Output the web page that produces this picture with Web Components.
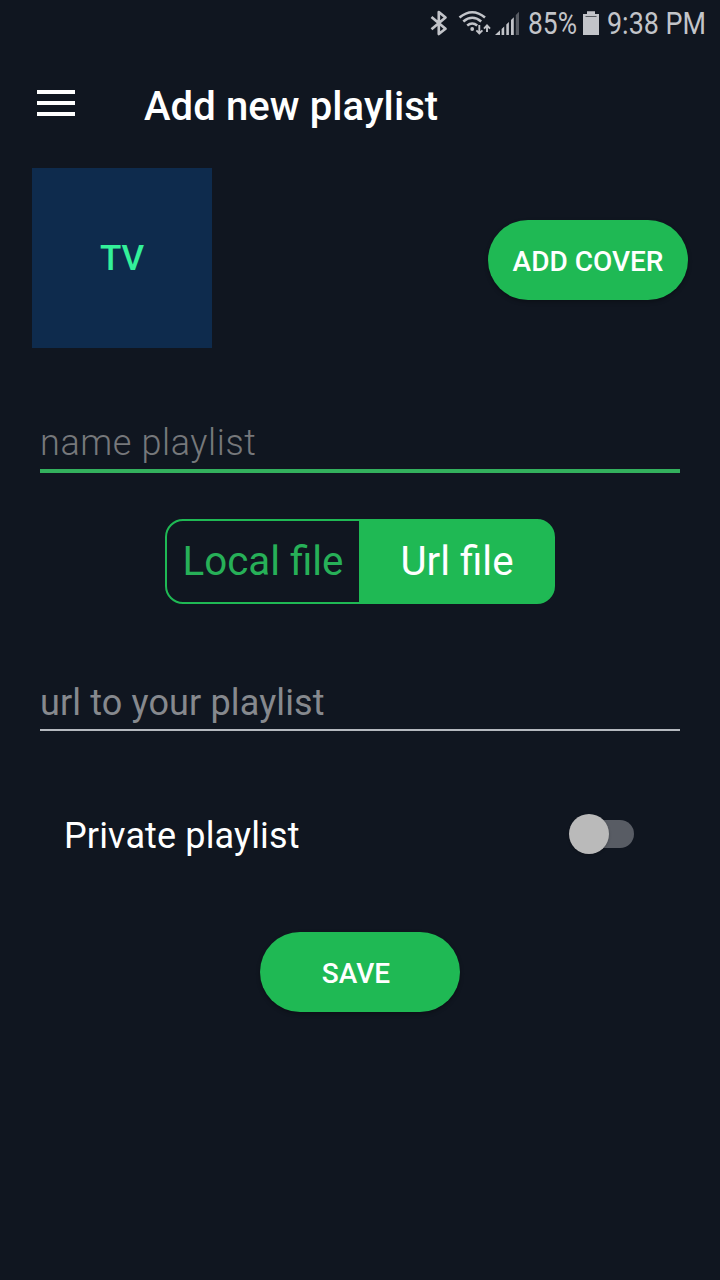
<!DOCTYPE html>
<html lang="en">
<head>
<meta charset="utf-8">
<title>Add new playlist</title>
<style>
  body {
    margin: 0;
    background: #101620;
    color: #fff;
    font-family: Roboto, "Liberation Sans", sans-serif;
    --green: #1fb954;
  }
</style>
</head>
<body>
<playlist-app></playlist-app>

<script>
class StatusBar extends HTMLElement {
  constructor() {
    super();
    this.attachShadow({ mode: "open" });
  }

  get styles() {
    return `
      :host {
        display: block;
        height: 48px;
      }
      svg {
        display: block;
      }
      text {
        font-size: 30.5px;
      }
    `;
  }

  connectedCallback() {
    this.shadowRoot.innerHTML = `
      <style>${this.styles}</style>
      <svg width="720" height="48" fill="#c2c4c9">
        <!-- bluetooth -->
        <path d="M431.5 17 L445.5 28.8 L438.8 34 V12 L445.5 17.5 L431.5 29.2"
          fill="none" stroke="#c2c4c9" stroke-width="2.7" stroke-linejoin="round"/>
        <!-- wifi -->
        <g fill="none" stroke="#c2c4c9" stroke-width="2.6">
          <path d="M459.5 17.5 Q472.3 7 485 17.5"/>
          <path d="M463.3 21.5 Q472.3 14 481.2 21.5"/>
          <path d="M467.2 25.5 Q472.3 21.5 477.2 25.5"/>
        </g>
        <circle cx="472.2" cy="29" r="1.9"/>
        <path d="M479.3 25 V33.5 M476.4 30.4 L479.3 33.4 L482.4 30.4 M487 32 V25.4 M484 28.6 L487 25.4 L490 28.6"
          fill="none" stroke="#c2c4c9" stroke-width="1.9"/>
        <!-- signal -->
        <path d="M495 35 L500 30.2 V35 Z M501.6 29 L504.2 26.4 V35 H501.6 Z M506.3 24.6 L508.9 22 V35 H506.3 Z M511 20 L513.8 17.2 V35 H511 Z"/>
        <path d="M515.8 15 L519 11.8 V35 H515.8 Z" opacity=".4"/>
        <text x="528" y="34.3" textLength="49" lengthAdjust="spacingAndGlyphs">85%</text>
        <!-- battery -->
        <path d="M583 14 H587 V11.3 H595 V14 H599 V35 H583 Z"/>
        <path d="M585.5 16.5 H596.5" stroke="#55595f" stroke-width="1"/>
        <text x="607" y="34.3" textLength="99" lengthAdjust="spacingAndGlyphs">9:38 PM</text>
      </svg>
    `;
  }
}

customElements.define("status-bar", StatusBar);

class AppBar extends HTMLElement {
  constructor() {
    super();
    this.attachShadow({ mode: "open" });
  }

  get styles() {
    return `
      :host {
        display: flex;
        align-items: center;
        height: 112px;
        gap: 69px;
        padding-left: 37px;
      }
      .menu {
        display: grid;
        gap: 7px;
        width: 38px;
        margin-top: -2px;
      }
      .menu i {
        height: 4px;
        background: #fff;
      }
      h1 {
        margin: 5px 0 0;
        font-size: 40px;
        font-weight: 500;
        letter-spacing: 0.1px;
        line-height: 48px;
      }
    `;
  }

  connectedCallback() {
    this.shadowRoot.innerHTML = `
      <style>${this.styles}</style>
      <div class="menu"><i></i><i></i><i></i></div>
      <h1><slot></slot></h1>
    `;
  }
}

customElements.define("app-bar", AppBar);

class PillButton extends HTMLElement {
  constructor() {
    super();
    this.attachShadow({ mode: "open" });
  }

  get styles() {
    return `
      :host {
        display: block;
        box-sizing: border-box;
        width: 200px;
        height: 80px;
        padding-top: 2px;
        border-radius: 40px;
        background: var(--green);
        box-shadow: 0 2px 4px rgba(0, 0, 0, 0.3);
        font-size: 28px;
        font-weight: 500;
        line-height: 80px;
        text-align: center;
        white-space: nowrap;
      }
    `;
  }

  connectedCallback() {
    this.shadowRoot.innerHTML = `
      <style>${this.styles}</style>
      <slot></slot>
    `;
  }
}

customElements.define("pill-button", PillButton);

class TextField extends HTMLElement {
  constructor() {
    super();
    this.attachShadow({ mode: "open" });
  }

  get styles() {
    return `
      :host {
        display: block;
        margin: 0 40px;
        border-bottom: 2px solid #b5b9bf;
        color: #86898e;
        font-size: 36px;
        letter-spacing: 0.13px;
        line-height: 52px;
      }
      :host([focused]) {
        border-bottom: 4px solid #33b05d;
        color: #76787b;
        font-weight: 300;
        letter-spacing: 0.6px;
      }
    `;
  }

  connectedCallback() {
    this.shadowRoot.innerHTML = `
      <style>${this.styles}</style>
      <slot></slot>
    `;
  }
}

customElements.define("text-field", TextField);

class SegmentSwitch extends HTMLElement {
  constructor() {
    super();
    this.attachShadow({ mode: "open" });
  }

  get styles() {
    return `
      :host {
        display: flex;
        box-sizing: border-box;
        width: 390px;
        height: 85px;
        border: 2px solid var(--green);
        border-radius: 18px;
        background: linear-gradient(90deg, transparent 192px, var(--green) 192px) border-box;
        background-origin: padding-box;
        font-size: 40.3px;
        line-height: 81px;
        text-align: center;
      }
      div {
        width: 192px;
        color: #27b058;
      }
      .on {
        flex: 1;
        padding-left: 2px;
        color: #fff;
      }
    `;
  }

  connectedCallback() {
    this.shadowRoot.innerHTML = `
      <style>${this.styles}</style>
      <div><slot name="off"></slot></div>
      <div class="on"><slot name="on"></slot></div>
    `;
  }
}

customElements.define("segment-switch", SegmentSwitch);

class ToggleRow extends HTMLElement {
  constructor() {
    super();
    this.attachShadow({ mode: "open" });
  }

  get styles() {
    return `
      :host {
        display: flex;
        justify-content: space-between;
        align-items: center;
        height: 40px;
        padding: 0 86px 0 64px;
        font-size: 36px;
        letter-spacing: 0.14px;
      }
      .label {
        padding-top: 3px;
      }
      .track {
        display: flex;
        align-items: center;
        width: 60px;
        height: 28px;
        border-radius: 14px;
        background: #585c64;
      }
      .thumb {
        width: 40px;
        height: 40px;
        margin-left: -5px;
        border-radius: 50%;
        background: #bababa;
        box-shadow: 0 1px 3px rgba(0, 0, 0, 0.2);
      }
    `;
  }

  connectedCallback() {
    this.shadowRoot.innerHTML = `
      <style>${this.styles}</style>
      <span class="label"><slot></slot></span>
      <div class="track"><div class="thumb"></div></div>
    `;
  }
}

customElements.define("toggle-row", ToggleRow);

class PlaylistApp extends HTMLElement {
  constructor() {
    super();
    this.attachShadow({ mode: "open" });
  }

  get styles() {
    return `
      :host {
        display: flex;
        flex-direction: column;
        width: 720px;
        height: 1280px;
        overflow: hidden;
      }
      .cover-row {
        display: flex;
        justify-content: space-between;
        align-items: center;
        margin: 8px 32px 69px;
      }
      .cover {
        width: 180px;
        height: 180px;
        background: #0e2b4d;
        color: #33f09a;
        font-size: 35px;
        font-weight: 500;
        line-height: 182px;
        text-align: center;
      }
      .cover-row pill-button {
        margin-top: 4px;
      }
      segment-switch {
        margin: 46px auto 73px 165px;
      }
      toggle-row {
        margin: 83px 0 78px;
      }
      .save {
        align-self: center;
        padding-right: 8px;
      }
    `;
  }

  connectedCallback() {
    this.shadowRoot.innerHTML = `
      <style>${this.styles}</style>
      <status-bar></status-bar>
      <app-bar>Add new playlist</app-bar>
      <div class="cover-row">
        <div class="cover">TV</div>
        <pill-button>ADD COVER</pill-button>
      </div>
      <text-field focused>name playlist</text-field>
      <segment-switch>
        <span slot="off">Local file</span>
        <span slot="on">Url file</span>
      </segment-switch>
      <text-field>url to your playlist</text-field>
      <toggle-row>Private playlist</toggle-row>
      <pill-button class="save">SAVE</pill-button>
    `;
  }
}

customElements.define("playlist-app", PlaylistApp);
</script>
</body>
</html>
